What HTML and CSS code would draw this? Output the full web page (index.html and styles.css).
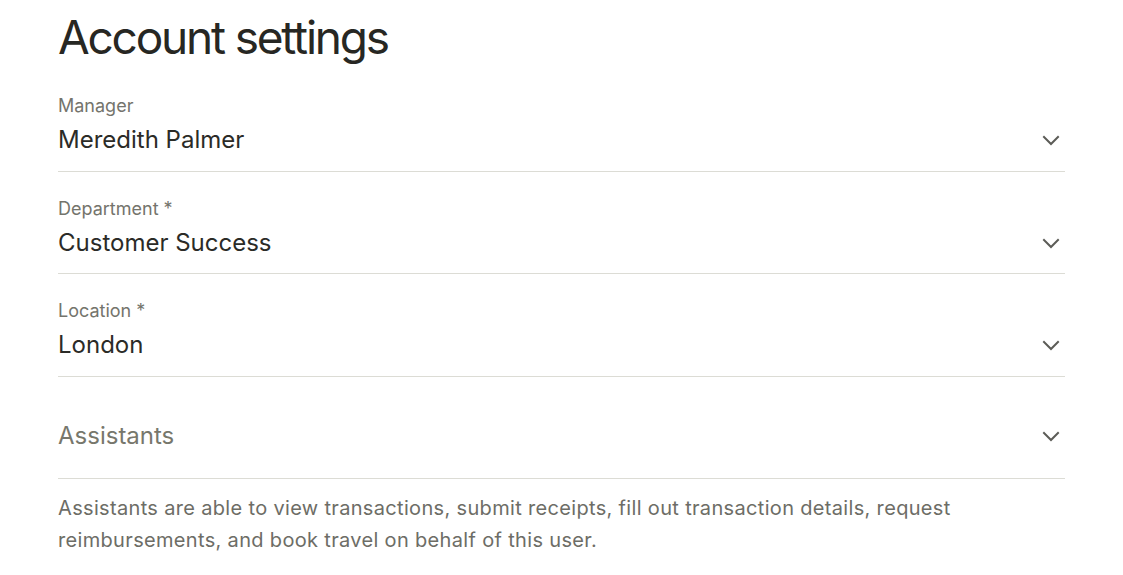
FILE: index.html
```html
<!DOCTYPE html>
<html lang="en">
<head>
<meta charset="utf-8">
<title>Account settings</title>
<link rel="stylesheet" href="styles.css">
</head>
<body>
<main class="page">
  <h1 class="title">Account settings</h1>
  <div class="field">
    <div class="field-label">Manager</div>
    <div class="field-control">
      <span class="field-value">Meredith Palmer</span>
      <svg class="chevron" viewBox="0 0 24 24" width="24" height="24" aria-hidden="true"><path d="M5 9l7 7 7-7"/></svg>
    </div>
  </div>
  <div class="field">
    <div class="field-label">Department *</div>
    <div class="field-control">
      <span class="field-value">Customer Success</span>
      <svg class="chevron" viewBox="0 0 24 24" width="24" height="24" aria-hidden="true"><path d="M5 9l7 7 7-7"/></svg>
    </div>
  </div>
  <div class="field">
    <div class="field-label">Location *</div>
    <div class="field-control">
      <span class="field-value">London</span>
      <svg class="chevron" viewBox="0 0 24 24" width="24" height="24" aria-hidden="true"><path d="M5 9l7 7 7-7"/></svg>
    </div>
  </div>
  <div class="field field-empty">
    <div class="field-control">
      <span class="field-value placeholder">Assistants</span>
      <svg class="chevron" viewBox="0 0 24 24" width="24" height="24" aria-hidden="true"><path d="M5 9l7 7 7-7"/></svg>
    </div>
  </div>
  <p class="help">Assistants are able to view transactions, submit receipts, fill out transaction details, request reimbursements, and book travel on behalf of this user.</p>
</main>
</body>
</html>
```
FILE: styles.css
```css
* { box-sizing: border-box; }
html, body { margin: 0; padding: 0; background: #ffffff; }
body {
  font-family: Inter, "Noto Sans", "Liberation Sans", sans-serif;
  color: #2b2b27;
}
.page {
  width: 1007px;
  margin-left: 58px;
  padding-top: 9px;
}
.title {
  margin: 0 0 4px;
  font-size: 46px;
  line-height: 56px;
  font-weight: 400;
  letter-spacing: -2.2px;
  color: #272723;
}
.field {
  padding: 25px 0 14.5px;
  border-bottom: 1px solid #dcdcd5;
}
.field-label {
  font-size: 18px;
  line-height: 24px;
  color: #74746c;
  margin-bottom: 6px;
}
.field-control {
  display: flex;
  align-items: center;
  justify-content: space-between;
  height: 32px;
}
.field-value {
  font-size: 24px;
  line-height: 32px;
  color: #2b2b27;
}
.field-value.placeholder { color: #77776c; }
.chevron {
  margin-right: 2px;
  fill: none;
  stroke: #5c5c57;
  stroke-width: 2;
  stroke-linecap: square;
}
.field-empty {
  padding: 43px 0 26px;
}
.help {
  margin: 13px 0 0;
  font-size: 20px;
  line-height: 32px;
  letter-spacing: 0.33px;
  color: #6d6d66;
  max-width: 920px;
}
```
